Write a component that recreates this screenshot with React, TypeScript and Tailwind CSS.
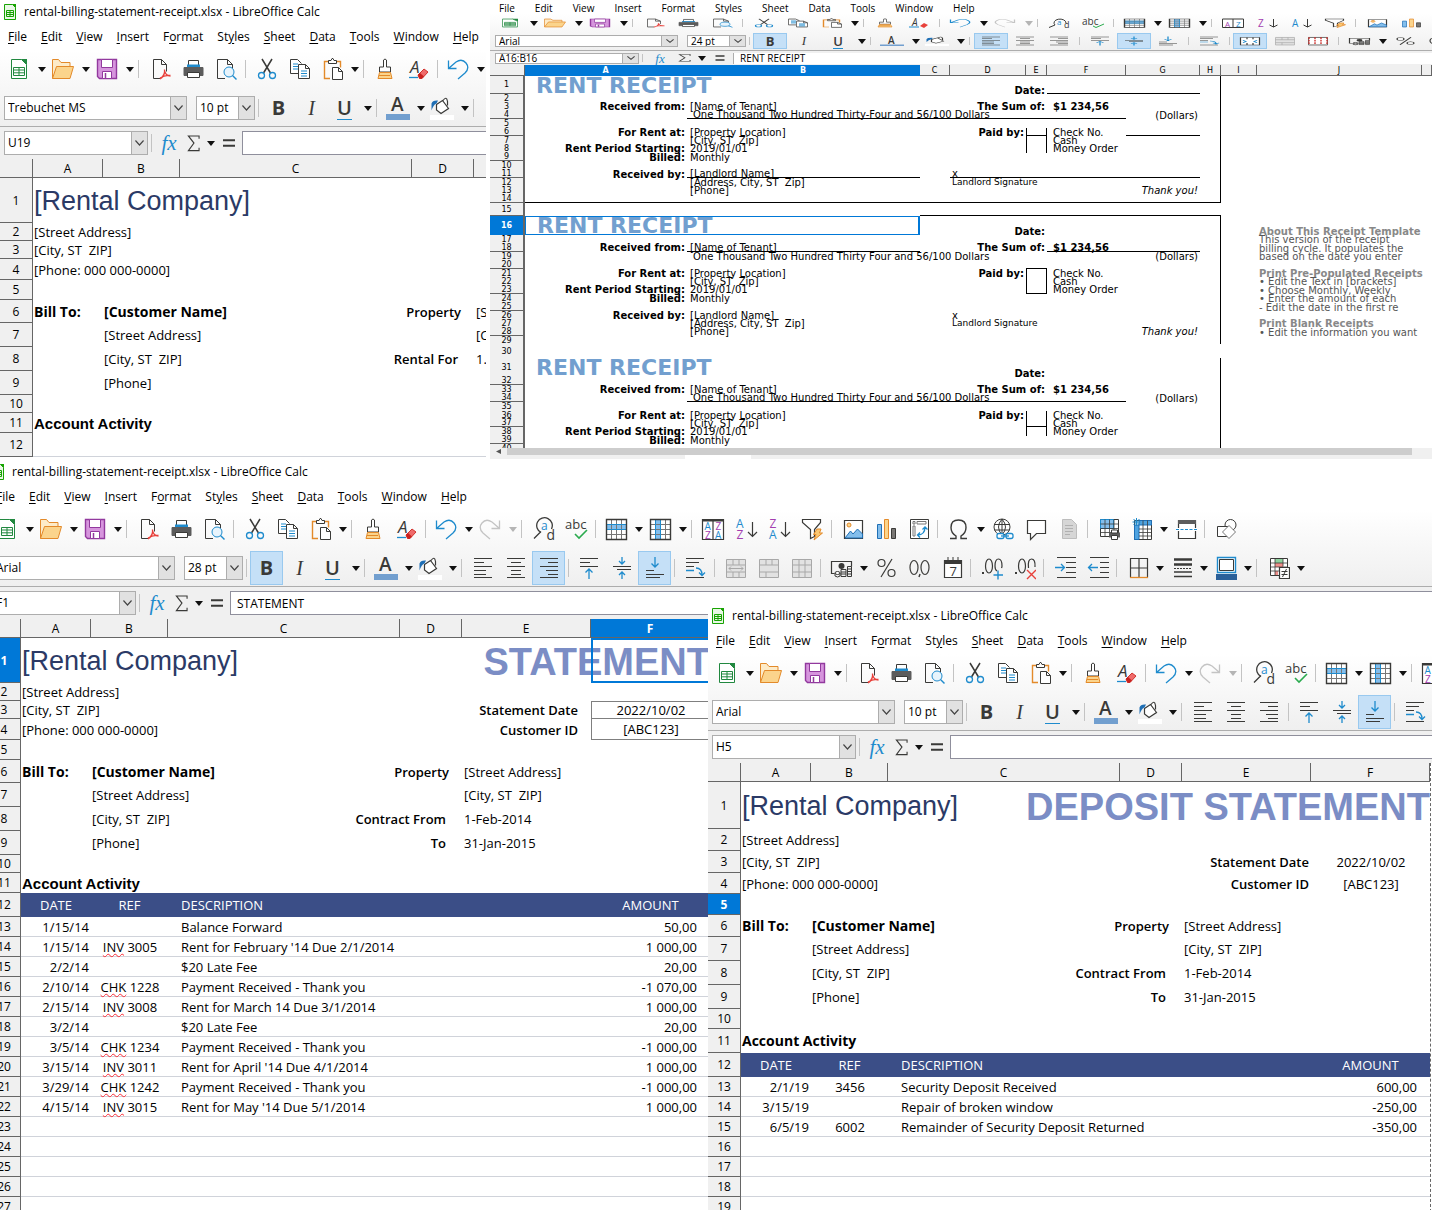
import type { ReactNode } from "react";
import clsx from "clsx";

const K = "#3a3a38";
const B = "#1e8bcd";

const sans = "font-['Open_Sans','Noto_Sans',sans-serif]";
const arial = "font-['Liberation_Sans',Arial,sans-serif]";
const wide = "font-['DejaVu_Sans',Verdana,sans-serif]";

const svgText = { fontFamily: "Open Sans, Noto Sans, sans-serif" };

const gridLines = "M2.5 7.5h20M2.5 12.5h20M2.5 17.5h20M7.5 2.5v20M12.5 2.5v20M17.5 2.5v20";

const icons: Record<string, ReactNode> = {
    new: <>
        <path d="M4.5 2.5h10l5 5v14h-15z" fill="#fff" stroke="#21883f" />
        <path d="M14 2h6v6z" fill="#21883f" />
        <path d="M6.5 10.5h11v8h-11zM6.5 13h11M6.5 15.8h11M12 10.5v8" fill="none" stroke="#21883f" />
    </>,
    open: <>
        <path d="M1.5 21.5v-19h6l2.5 3h9v5" fill="#fdebc8" stroke="#e38a2a" />
        <path d="M1.5 21.5l4-12h17l-3.5 12z" fill="#fbd48c" stroke="#e38a2a" />
    </>,
    save: <>
        <path d="M2.5 2.5h19v19h-17l-2-2z" fill="#d695dd" stroke="#92399e" strokeWidth="1.4" />
        <path d="M6.5 2.5h11v8h-11z" fill="#fff" stroke="#92399e" />
        <path d="M7.5 21.5v-7h9v7z" fill="#fff" stroke="#92399e" />
        <path d="M10.5 21v-5" stroke="#92399e" strokeWidth="1.5" />
    </>,
    pdf: <>
        <path d="M12 21.5H5.5v-19h8l5 5v7M13.5 2.5v5h5" fill="none" stroke={K} />
        <path d="M12 22c3-2 5-6 4.5-9.500M16.500 13c.5 4 3 6 6 6M12 21c3-2 6-3 10.500-2.500" fill="none" stroke="#e8403a" strokeWidth="1.3" />
    </>,
    print: <>
        <path d="M7.5 9.5v-6h10v6" fill="#fff" stroke={K} />
        <path d="M6 7.5h13v3H6z" fill={B} />
        <path d="M3 10.5h19v8H3z" fill="#5c5c5c" stroke="#5c5c5c" strokeLinejoin="round" />
        <path d="M6.5 15.5h12v5h-12z" fill="#fff" stroke={K} />
    </>,
    preview: <>
        <path d="M11 21.5H3.5v-19h10l5 5v4M13.5 2.5v5h5" fill="none" stroke={K} />
        <circle cx="15" cy="15" r="5" fill="#e8f4fc" stroke={B} />
        <path d="M18.5 18.5l4 4" stroke={B} strokeWidth="1.5" />
    </>,
    cut: <>
        <path d="M8 2l8.500 14M18 2L9.500 16" stroke={K} strokeWidth="1.5" />
        <circle cx="7.5" cy="18.5" r="3" fill="none" stroke={B} strokeWidth="1.3" />
        <circle cx="18.5" cy="18.5" r="3" fill="none" stroke={B} strokeWidth="1.3" />
    </>,
    copy: <>
        <path d="M11 16.5H3.5v-14h7l4 4" fill="#fff" stroke={K} />
        <path d="M6 7h5M6 9.500h5M6 12h5" stroke={B} />
        <path d="M11.5 7.5h7l4 4v10h-11zM18.5 7.5v4h4" fill="#fff" stroke={K} />
        <path d="M14 14h6M14 16.5h6M14 19h6" stroke={B} />
    </>,
    paste: <>
        <path d="M10 21.5H4.5v-17h16v6" fill="none" stroke="#e38a2a" strokeWidth="1.4" />
        <path d="M8.500 6.500v-3h2.500l1-2h1l1 2h2.500v3z" fill="#fff" stroke={K} />
        <path d="M12.5 10.500h6l4 4v8h-10zM18.500 10.500v4h4" fill="#fff" stroke={K} />
    </>,
    brush: <>
        <path d="M10.5 10V3q1.500-2 3 0v7h4v5H6.500v-5z" fill="#fff" stroke={K} />
        <path d="M6.500 15.500h11l1.500 6H5z" fill="#fbd48c" stroke="#e38a2a" />
        <path d="M6 18.500h11" stroke="#e38a2a" />
    </>,
    clear: <>
        <text x="4" y="16" fontSize="17" fontStyle="italic" fill={K} style={svgText}>A</text>
        <path d="M3 20.500h9" stroke={B} strokeWidth="1.3" />
        <path d="M12 18l6-6 4 3-6 6.500h-2.500z" fill="#ef6b6b" stroke="#d2322d" />
        <path d="M12 18l2-2 4 3.500-2 2h-2.500z" fill="#c9211e" />
    </>,
    undo: <path d="M2.500 3.500v8h8M2.500 11.500L10 5q6-4 10 1t-1 10l-7 6" fill="none" stroke={B} strokeWidth="1.3" />,
    redo: <path d="M21.500 3.500v8h-8M21.500 11.500L14 5q-6-4-10 1t1 10l7 6" fill="none" stroke="#c4c4c4" strokeWidth="1.3" />,
    find: <>
        <path d="M20.500 12a7.800 7.800 0 1 0-10.500 3.500M10 14.500l-7 7" fill="none" stroke={K} strokeWidth="1.3" />
        <text x="10" y="12.500" fontSize="12" fill={B} style={svgText}>a</text>
        <text x="15.500" y="22.500" fontSize="14" fill={K} style={svgText}>d</text>
    </>,
    spell: <>
        <text x="1" y="12" fontSize="13" fill={K} style={svgText}>abc</text>
        <path d="M11 17l4 4 8-8" fill="none" stroke="#2bab4f" strokeWidth="1.6" />
    </>,
    row: <>
        <path d="M2.500 2.500h20v20h-20z" fill="#fff" />
        <path d="M2.500 7.500h20v5h-20z" fill="#83beec" />
        <path d={gridLines} stroke="#777" />
        <path d="M2.500 7.500h20M2.500 12.500h20" stroke={B} />
        <path d="M2.500 2.500h20v20h-20z" fill="none" stroke={K} strokeWidth="1.4" />
    </>,
    col: <>
        <path d="M2.500 2.500h20v20h-20z" fill="#fff" />
        <path d="M7.500 2.500h5v20h-5z" fill="#83beec" />
        <path d={gridLines} stroke="#777" />
        <path d="M7.500 2.500v20M12.500 2.500v20" stroke={B} />
        <path d="M2.500 2.500h20v20h-20z" fill="none" stroke={K} strokeWidth="1.4" />
    </>,
    sort: <>
        <path d="M1.500 2.500h21v20h-21zM12 3v19" fill="#fff" stroke={K} strokeWidth="1.2" />
        <path d="M1 2h22v2.500H1z" fill={K} />
        <g fontSize="10" style={svgText}>
            <text x="3.500" y="13" fill={B}>A</text>
            <text x="4" y="22" fill="#a33eb0">Z</text>
            <text x="14.500" y="13" fill="#a33eb0">Z</text>
            <text x="14" y="22" fill={B}>A</text>
        </g>
    </>,
    asc: <>
        <g fontSize="12" style={svgText}>
            <text x="2" y="11" fill={B}>A</text>
            <text x="2.500" y="22" fill="#a33eb0">Z</text>
        </g>
        <path d="M18.500 5v14M14 15l4.500 4.500L23 15" fill="none" stroke={K} strokeWidth="1.2" />
    </>,
    desc: <>
        <g fontSize="12" style={svgText}>
            <text x="2.500" y="11" fill="#a33eb0">Z</text>
            <text x="2" y="22" fill={B}>A</text>
        </g>
        <path d="M18.500 5v14M14 15l4.500 4.500L23 15" fill="none" stroke={K} strokeWidth="1.2" />
    </>,
    filter: <>
        <path d="M2.500 2.500h18v3l-6 7v7l-4 2v-9l-8-7z" fill="#fff" stroke={K} strokeWidth="1.2" />
        <path d="M17 12h4l-1.500 4h3L14 23l2-5.500h-2.500z" fill="#fbc873" stroke="#e38a2a" />
    </>,
    image: <>
        <path d="M4.500 3.500h18v18h-18z" fill="#fff" stroke={K} strokeWidth="1.2" />
        <circle cx="9" cy="8" r="2" fill="#fbd48c" stroke="#e38a2a" />
        <path d="M5 21l5.500-7 2.500 3 4.500-5 5 5v4z" fill="#83beec" stroke="#1f6fb5" />
    </>,
    chart: <>
        <path d="M4.500 7.500h4v14h-4z" fill="#83beec" stroke="#1f6fb5" />
        <path d="M11.500 2.500h4v19h-4z" fill="#fbd48c" stroke="#e38a2a" />
        <path d="M18.500 11.500h4v10h-4z" fill="#797774" stroke={K} />
    </>,
    pivot: <>
        <path d="M4.500 2.500h18v19h-18z" fill="#fff" stroke={K} />
        <path d="M7 4.500h2V7H7zM11 4.500h9V7h-9zM7 9h2v10H7z" fill="none" stroke="#777" />
        <path d="M11.500 18q7.500 0 7.500-8M16.500 12.500L19 10l2.500 2.500M14 15.500L11.500 18l2.500 2.500" fill="none" stroke={B} strokeWidth="1.3" />
    </>,
    omega: <path d="M4 21.500h6V19Q5 16 5 10.500 5 3 12.500 3T20 10.500q0 5.500-5 8.500v2.500h6" fill="none" stroke={K} strokeWidth="1.4" />,
    link: <>
        <circle cx="12" cy="10" r="8" fill="#fff" stroke={K} />
        <path d="M12 2q-7 8 0 16M12 2q7 8 0 16M4.500 7.500h15M4.500 13h15M12 2v16" fill="none" stroke={K} />
        <rect x="7" y="16.500" width="7" height="5" rx="2" fill="#fff" stroke={B} strokeWidth="1.3" />
        <rect x="16" y="16.500" width="7" height="5" rx="2" fill="#fff" stroke={B} strokeWidth="1.3" />
        <path d="M11 19h8" stroke={B} strokeWidth="1.3" />
    </>,
    comment: <path d="M4.500 3.500h18v13h-9l-6 6v-6h-3z" fill="#fff" stroke={K} strokeWidth="1.2" />,
    page: <>
        <path d="M6.500 2.500h9l5 5v14h-14z" fill="#d6d6d6" stroke="#bdbdbd" />
        <path d="M9 8.500h8M9 11.500h8M9 14.500h8M9 17.500h5" stroke="#b0b0b0" />
    </>,
    printArea: <>
        <path d="M4.500 2.500h18v17h-18z" fill="#fff" stroke={K} />
        <path d="M4.500 2.500h13v9h-13z" fill="#83beec" stroke={B} />
        <path d="M4.500 7h18M4.500 11.500h18M4.500 15.500h18M9 2.500v17M13.500 2.500v17M18 2.500v17" stroke={K} strokeWidth=".8" />
        <path d="M13 15.500h11v5H13z" fill="#5c5c5c" />
        <path d="M15.500 13h6v3h-6zM15.500 18.500h6v4h-6z" fill="#fff" stroke={K} />
    </>,
    freeze: <>
        <path d="M5.500 3.500h17v19h-17z" fill="#fff" stroke={K} />
        <path d="M5.500 8v14.500H10V8zM10 3.500h12.500V8H10z" fill="#4fa3e0" stroke="#1f6fb5" />
        <path d="M10 12h12.500M10 15.500h12.500M10 19h12.500M14 3.500v19M18.500 3.500v19" stroke={K} strokeWidth=".8" />
        <path d="M7.500 1v8M3.500 5h8M4.500 2l6 6M10.500 2l-6 6" stroke={B} />
    </>,
    split: <>
        <path d="M5.500 3.500h17v18h-17z" fill="#fff" stroke={K} strokeWidth="1.2" />
        <path d="M5 3h18v4H5z" fill="#5c5c5c" />
        <path d="M3 12.500h21" stroke="#fff" strokeWidth="3" />
        <path d="M3 12.500h21" stroke={B} strokeDasharray="3 1.500" />
    </>,
    draw: <>
        <circle cx="17.500" cy="8" r="5.500" fill="#fff" stroke={K} />
        <path d="M4.500 9.500h11v10h-11z" fill="#fff" stroke={K} />
        <path d="M16 8.500l6.500 6.500-6.500 6.500L9.500 15z" fill="#fff" stroke="#777" />
    </>,
    fontColor: <>
        <text x="5" y="15" fontSize="19" fontWeight="600" fill={K} style={svgText}>A</text>
        <path d="M0 18h24v6H0z" fill="#729fcf" />
    </>,
    fill: <>
        <path d="M6.500 8.500l6-4 6 8-7.500 5-4.500-3.500zM13 4.500q3.500-5 4.500 1v4" fill="#fff" stroke={K} strokeWidth="1.2" />
        <path d="M8 4.500q-5.500-.5-6.500 3v7q2-6 5-7z" fill="#1f6fb5" />
        <path d="M0 19h24v5H0z" fill="#fff" />
    </>,
    left: <path d="M3 2.500h18M3 6.500h10M3 10.500h18M3 14.500h12M3 18.500h12M3 21.500h18" stroke={K} strokeWidth="1.2" />,
    center: <path d="M3 2.500h18M7 6.500h10M3 10.500h18M7 14.500h10M7 18.500h10M3 21.500h18" stroke={K} strokeWidth="1.2" />,
    right: <path d="M3 2.500h18M11 6.500h10M3 10.500h18M9 14.500h12M11 18.500h10M3 21.500h18" stroke={K} strokeWidth="1.2" />,
    top: <>
        <path d="M3 2.500h18M3 6.500h10M3 10.500h18" stroke={K} strokeWidth="1.2" />
        <path d="M12 23V13M8.500 16.500L12 13l3.500 3.500" fill="none" stroke={B} strokeWidth="1.3" />
    </>,
    middle: <>
        <path d="M3 10.500h18M7 13.500h14" stroke={K} strokeWidth="1.2" />
        <path d="M12 1v7M9 5l3 3 3-3M12 23v-7M9 19l3-3 3 3" fill="none" stroke={B} strokeWidth="1.3" />
    </>,
    bottom: <>
        <path d="M3 14.500h8M3 18.500h18M3 21.500h14" stroke={K} strokeWidth="1.2" />
        <path d="M12 1v10M8.500 7.500L12 11l3.500-3.500" fill="none" stroke={B} strokeWidth="1.3" />
    </>,
    wrap: <>
        <path d="M3 2.500h18M3 6.500h13M3 10.500h8M3 21.500h18" stroke={K} strokeWidth="1.2" />
        <path d="M3 14.500h8M13 12q6 0 6 7M16 16.500l3 3 3-3" fill="none" stroke={B} strokeWidth="1.3" />
    </>,
    merge: <>
        <path d="M3.500 3.500h19v18h-19zM3.500 9h19M3.500 16h19M10 3.500V9M16 3.500V9M10 16v5.500M16 16v5.500" fill="#e2e2e2" stroke="#a8a8a8" />
        <path d="M6 12.500h14M8 10.500l-2 2 2 2M18 10.500l2 2-2 2" fill="none" stroke="#a8a8a8" />
    </>,
    mergeOn: <>
        <path d="M2.500 3.500h19v18h-19z" fill="#fff" stroke={K} strokeWidth="1.2" />
        <path d="M9 3.500V8M15 3.500V8M9 17v4.500M15 17v4.500" stroke={K} strokeWidth="1.2" />
        <path d="M5 10l3 3-3 3M19 10l-3 3 3 3" fill="none" stroke={B} strokeWidth="1.5" />
    </>,
    mergeRow: <path d="M3.500 3.500h19v18h-19zM3.500 9h19M3.500 16h19M10 3.500V9M16 3.500V9M10 16v5.500" fill="#e2e2e2" stroke="#a8a8a8" />,
    unmerge: <path d="M3.500 3.500h19v18h-19zM3.500 9h19M3.500 16h19M10 3.500v18M16 3.500v18" fill="#e2e2e2" stroke="#a8a8a8" />,
    unmergeOn: <>
        <path d="M2.500 3.500h19v18h-19z" fill="#fff" stroke={K} />
        <path d="M3 3v18M9 3v18M15 3v18M21 3v18" stroke="#c9211e" strokeWidth="1.3" strokeDasharray="4 2" />
    </>,
    currency: <>
        <path d="M5.500 17.500H2.500v-12h20v5" fill="none" stroke={K} strokeWidth="1.2" />
        <circle cx="12.500" cy="10" r="3" fill={K} />
        <ellipse cx="8.500" cy="17" rx="2.500" ry="1.500" fill="#fff" stroke={K} />
        <path d="M6 17v3q2.500 2 5 0v-3M12 13.500h5v7h-5zM12 16h5M12 18h5M18.500 10.500h4v10h-4zM18.500 13h4M18.500 15.500h4M18.500 18h4" fill="none" stroke={K} />
    </>,
    percent: <>
        <circle cx="8.500" cy="7" r="3.500" fill="none" stroke={K} strokeWidth="1.2" />
        <circle cx="18.500" cy="17" r="3.500" fill="none" stroke={K} strokeWidth="1.2" />
        <path d="M19 3L8 21" stroke={K} strokeWidth="1.2" />
    </>,
    number: <>
        <ellipse cx="8" cy="11.500" rx="4" ry="7" fill="none" stroke={K} strokeWidth="1.2" />
        <ellipse cx="19" cy="11.500" rx="4" ry="7" fill="none" stroke={K} strokeWidth="1.2" />
        <path d="M14 18l-1 3" stroke={K} strokeWidth="1.4" />
    </>,
    date: <>
        <path d="M5.500 4.500h17v17h-17z" fill="#fff" stroke={K} strokeWidth="1.2" />
        <path d="M5 4h18v4H5z" fill={K} />
        <path d="M9 1v4M14 1v4M19 1v4" stroke={K} />
        <text x="10.500" y="20" fontSize="13" fill={K} style={svgText}>7</text>
    </>,
    addDec: <>
        <ellipse cx="10" cy="10" rx="3.500" ry="7" fill="none" stroke={K} strokeWidth="1.2" />
        <path d="M18 15q-2-1-2-5 0-7 3.500-7T23 10q0 1-.5 2" fill="none" stroke={K} strokeWidth="1.2" />
        <path d="M3 16h2v2H3z" fill={K} />
        <path d="M19 14.500v9M14.500 19H24" stroke={B} strokeWidth="1.4" />
    </>,
    delDec: <>
        <ellipse cx="10" cy="10" rx="3.500" ry="7" fill="none" stroke={K} strokeWidth="1.2" />
        <path d="M16.500 12q-1-9 3-9t3.500 8" fill="none" stroke={K} strokeWidth="1.2" />
        <path d="M3 16h2v2H3z" fill={K} />
        <path d="M15 14l9 9M24 14l-9 9" stroke="#e8403a" strokeWidth="1.4" />
    </>,
    indent: <>
        <path d="M5 1.500h19M14 6.500h10M14 11.500h10M14 16.500h10M5 21.500h19" stroke={K} strokeWidth="1.2" />
        <path d="M3 11.500h9M9 8l3.500 3.500L9 15" fill="none" stroke={B} strokeWidth="1.3" />
    </>,
    outdent: <>
        <path d="M5 1.500h19M15 6.500h9M15 11.500h9M15 16.500h9M5 21.500h19" stroke={K} strokeWidth="1.2" />
        <path d="M13 11.500H4M7 8l-3.500 3.500L7 15" fill="none" stroke={B} strokeWidth="1.3" />
    </>,
    borders: <>
        <path d="M5.500 21.500v-19h17v19M5.500 12h17M14 2.500v19" fill="none" stroke={K} strokeWidth="1.2" />
        <path d="M5 21.500h18" stroke="#e38a2a" strokeWidth="1.3" />
    </>,
    lineStyle: <>
        <path d="M5 3.500h18M5 8.500h18" stroke={K} strokeWidth="2.500" />
        <path d="M5 12.500h18" stroke={K} strokeDasharray="2 1" />
        <path d="M5 16h18M5 20.500h18" stroke={K} strokeWidth="1.4" />
    </>,
    borderColor: <>
        <path d="M4.500 1.500h18v15h-18z" fill="#fff" stroke={B} strokeWidth="1.4" />
        <path d="M6.500 3.500h14v11h-14z" fill="none" stroke={K} />
        <path d="M3 18h21v6H3z" fill="#2a6099" />
    </>,
    cond: <>
        <path d="M4.500 2.500h17v17h-17z" fill="#fff" stroke={K} />
        <path d="M9 3h8v4H9z" fill="#8fd19e" />
        <path d="M9 7h8v4H9z" fill="#f08f8b" />
        <path d="M9 15h3v4H9z" fill="#f08f8b" />
        <path d="M4.500 7h17M4.500 11h17M4.500 15h9M9 2.500v17M17 2.500v8" stroke={K} strokeWidth=".8" />
        <path d="M13.500 11.500h10v11h-10z" fill="#fff" stroke={K} strokeWidth="1.2" />
        <path d="M15.500 15.500h6M15.500 18.500h6M20.500 13l-4 8" stroke={K} />
    </>,
};

// low versions of the icons that carry letters, so the letters keep their shape
const lowIcons: Record<string, ReactNode> = {
    clear: <>
        <text x="5" y="8" fontSize="10" fontStyle="italic" fill={K} style={svgText}>A</text>
        <path d="M2 9h10" stroke={B} />
        <path d="M13 8l4-3 4 2-4 3z" fill="#e8403a" />
    </>,
    find: <>
        <path d="M8 7L2 9.500M8 7a6 3.800 0 1 1 11-2" fill="none" stroke={K} />
        <text x="10" y="7" fontSize="8" fill={B} style={svgText}>a</text>
        <text x="17" y="10" fontSize="9" fill={K} style={svgText}>d</text>
    </>,
    spell: <>
        <text x="1" y="7" fontSize="10" fill={K} style={svgText}>abc</text>
        <path d="M12 8l3 1.500L23 6" fill="none" stroke="#2bab4f" />
    </>,
    sort: <>
        <path d="M1.500 1h21v8.500h-21zM12 1v8" fill="#fff" stroke={K} />
        <text x="4" y="8.500" fontSize="8" fill="#a33eb0" style={svgText}>A</text>
        <text x="15" y="8.500" fontSize="8" fill={B} style={svgText}>Z</text>
    </>,
    asc: <>
        <text x="3" y="9" fontSize="10" fill="#a33eb0" style={svgText}>Z</text>
        <path d="M18.500 1v8M14.500 7l4 2 4-2" fill="none" stroke={K} />
    </>,
    desc: <>
        <text x="3" y="9" fontSize="10" fill={B} style={svgText}>A</text>
        <path d="M18.500 1v8M14.500 7l4 2 4-2" fill="none" stroke={K} />
    </>,
    fontColor: <>
        <text x="8" y="8" fontSize="10" fontWeight="600" fill={K} style={svgText}>A</text>
        <path d="M0 8.500h24v2H0z" fill="#729fcf" />
    </>,
    date: <path d="M3.500 1h18v8h-18z" fill="#fff" stroke={K} />,
};

const Icon = ({ name, low }: { name: string; low?: boolean }) => {
    if (low && lowIcons[name]) {
        return <svg viewBox="0 0 24 10" className="h-[10px] w-6 shrink-0">{lowIcons[name]}</svg>;
    }
    return (
        <svg viewBox="0 0 24 24" preserveAspectRatio="none" className={low ? "h-[10px] w-6 shrink-0" : "size-6 shrink-0"}>
            {icons[name]}
        </svg>
    );
};

const Caret = ({ pale, label }: { pale?: boolean; label: string }) => (
    <button aria-label={label} className="flex h-full w-[11px] shrink-0 items-center justify-end">
        <svg viewBox="0 0 8 5" className="h-[5px] w-2">
            <path d="M0 0h8L4 5z" fill={pale ? "#b5b5b5" : "#111"} />
        </svg>
    </button>
);

const Sep = ({ wide, low }: { wide?: boolean; low?: boolean }) => (
    <div className={clsx("flex shrink-0 justify-center", wide ? "w-[9px]" : "w-[7px]")}>
        <div className={clsx("w-px bg-[#c3c3c3]", low ? "h-2" : "h-[18px]")} />
    </div>
);

// "|" is a separator, "||" the wider one after a drop-down, a trailing ":v" adds a drop-down
const Tools = ({ items, low, on = [] }: { items: string; low?: boolean; on?: string[] }) => (
    <>
        {items.split(" ").map((item, i) => {
            if (item === "|" || item === "||") return <Sep key={i} wide={item === "||"} low={low} />;
            const drop = item.endsWith(":v");
            const name = item.replace(":v", "");
            const letter = ["B", "I", "U"].includes(name);
            return (
                <div key={i} className="flex h-full shrink-0 items-center">
                    <button
                        aria-label={name}
                        className={clsx(
                            "flex items-center justify-center border",
                            low ? "h-4 w-[34px]" : "h-[34px] w-[33px]",
                            on.includes(name) ? "border-[#99c9ef] bg-[#c5e0f7]" : "border-transparent"
                        )}
                    >
                        {letter ? (
                            <span
                                className={clsx(
                                    "text-[#3a3a38]",
                                    low ? "text-[13px] leading-[14px]" : "text-[20px] leading-6",
                                    name === "B" && "font-bold",
                                    name === "I" && "font-['Liberation_Serif',serif] italic",
                                    name === "U" && "border-b border-[#1e8bcd] font-semibold",
                                    name === "U" && (low ? "leading-[11px]" : "leading-[22px]")
                                )}
                            >
                                {name}
                            </span>
                        ) : (
                            <Icon name={name} low={low} />
                        )}
                    </button>
                    {drop && <Caret label={`${name} options`} pale={name === "redo"} />}
                </div>
            );
        })}
    </>
);

const Chevron = ({ low }: { low?: boolean }) => (
    <span className="pointer-events-none absolute inset-y-0 right-0 flex w-[17px] items-center justify-center border border-[#adadad] bg-[#e1e1e1]">
        <svg viewBox="0 0 10 6" preserveAspectRatio="none" className={low ? "h-1 w-2" : "h-[6px] w-[9px]"}>
            <path d="M.5.5L5 5l4.500-4.500" fill="none" stroke="#444" strokeWidth="1.3" />
        </svg>
    </span>
);

const Combo = ({ value, label, width, low }: { value: string; label: string; width: string; low?: boolean }) => (
    <label className={clsx("relative flex shrink-0", width, low ? "h-3" : "h-6")}>
        <select
            aria-label={label}
            className={clsx("w-full appearance-none border border-[#adadad] bg-white pl-[3px]", low ? "text-[10px] leading-[10px]" : "text-xs")}
        >
            <option>{value}</option>
        </select>
        <Chevron low={low} />
    </label>
);

const menus: [string, string, string][] = [
    ["", "F", "ile"], ["", "E", "dit"], ["", "V", "iew"], ["", "I", "nsert"], ["F", "o", "rmat"], ["St", "y", "les"],
    ["", "S", "heet"], ["", "D", "ata"], ["", "T", "ools"], ["", "W", "indow"], ["", "H", "elp"],
];

const standardItems =
    "new:v open:v save:v || pdf print preview | cut copy paste:v || brush clear | undo:v redo:v || find spell | row:v col:v || sort asc desc filter | image chart pivot | omega:v link comment page | printArea freeze:v split | draw";
const formatItems =
    "B I U:v || fontColor:v fill:v || left center right | top middle bottom | wrap | merge mergeRow unmerge | currency:v percent number date | addDec delDec | indent outdent | borders:v lineStyle:v borderColor:v || cond:v";

type WindowProps = {
    title?: string;
    font: string;
    size: string;
    cell: string;
    formula?: string;
    on?: string[];
    low?: boolean;
    children: ReactNode;
};

const CalcWindow = ({ title, font, size, cell, formula = "", on, low, children }: WindowProps) => (
    <section className={clsx("flex h-full w-full flex-col overflow-hidden bg-white text-black", sans)}>
        {title && (
            <header className="flex h-6 shrink-0 items-center gap-2 pl-1 text-xs whitespace-nowrap">
                <svg viewBox="0 0 12 16" className="h-4 w-3">
                    <path d="M.5.5h8l3 3v12H.5z" fill="#e9f7e6" stroke="#18a303" />
                    <path d="M8 0h4v4z" fill="#18a303" />
                    <path d="M2.500 6.500h7v6h-7zM2.500 8.500h7M2.500 10.500h7M6 6.500v6" fill="none" stroke="#18a303" />
                </svg>
                <h1>{title}</h1>
            </header>
        )}
        <nav className={clsx("flex shrink-0 items-center whitespace-nowrap", low ? "h-[14px] gap-5 pt-0.5 pl-[9px] text-[10px] leading-3" : "h-[26px] gap-[14px] pl-2 text-xs")}>
            {menus.map(([a, key, b]) => (
                <button key={key + b}>
                    {a}<span className={low ? "" : "underline underline-offset-2"}>{key}</span>{b}
                </button>
            ))}
        </nav>
        <div className="shrink-0 bg-linear-to-b from-white to-[#efefef]">
            <div className={clsx("flex items-center", low ? "h-[18px] pl-[3px]" : "h-[38px] pl-0.5")}>
                <Tools items={standardItems} low={low} />
            </div>
            <div className={clsx("flex items-center border-b border-[#adadad]", low ? "h-[19px] pl-[5px]" : "h-[39px] pt-0.5 pl-1")}>
                <Combo value={font} label="Font name" width="w-[183px] mr-[9px]" low={low} />
                <Combo value={size} label="Font size" width="w-[59px]" low={low} />
                <Sep low={low} />
                <Tools
                    items={low ? formatItems.replace("merge ", "mergeOn ").replace("unmerge ", "unmergeOn ") : formatItems}
                    low={low}
                    on={on}
                />
            </div>
        </div>
        <div className={clsx("flex shrink-0 items-center bg-[#f0f0f0]", low ? "h-[14px] pl-[5px]" : "h-8 pl-1")}>
            <label className={clsx("relative flex w-36 shrink-0", low ? "h-[11px]" : "h-6")}>
                <input
                    aria-label="Name box"
                    defaultValue={cell}
                    className={clsx("w-full border border-[#adadad] bg-white pl-[3px]", low ? "text-[10px] leading-[9px]" : "text-xs")}
                />
                <Chevron low={low} />
            </label>
            <Sep low={low} />
            <button
                aria-label="Function wizard"
                className={clsx("w-7 shrink-0 font-['Liberation_Serif',serif] text-[#1e8bcd] italic", low ? "text-[13px] leading-[13px]" : "text-[21px] leading-6")}
            >
                fx
            </button>
            <button aria-label="Select function" className="flex shrink-0 items-center">
                <svg viewBox="0 0 14 18" preserveAspectRatio="none" className={clsx("mx-1 w-[13px]", low ? "h-2" : "h-[17px]")}>
                    <path d="M13 4V1H1.500l6 7.500-6 8H13v-3" fill="none" stroke={K} strokeWidth="1.2" />
                </svg>
            </button>
            <Caret label="Function options" />
            <button aria-label="Formula" className="ml-2 flex shrink-0">
                <svg viewBox="0 0 12 8" className={low ? "h-[6px] w-3" : "h-2 w-3"}>
                    <path d="M0 1.200h12M0 6.800h12" stroke={K} strokeWidth="2" />
                </svg>
            </button>
            <input
                aria-label="Input line"
                defaultValue={formula}
                className={clsx("ml-[7px] min-w-0 flex-1 bg-white pl-1.5", low ? "h-[11px] border-l border-[#adadad] text-[10px] leading-[9px]" : "h-6 border border-r-0 border-[#8f8f9c] text-xs")}
            />
        </div>
        {children}
    </section>
);

const colWidths = ["w-[33px]", "w-[70px]", "w-[77px]", "w-[232px]", "w-[62px]", "w-[129px]", "w-[119px]"];

const Sheet = ({ selected, edge, children }: { selected?: string; edge?: boolean; children: ReactNode }) => (
    <div className={clsx("w-fit", edge && "border-r border-dashed border-[#666]")}>
        <table className="w-[722px] table-fixed border-separate border-spacing-0 text-[13px] leading-4 whitespace-nowrap">
            <colgroup>
                {colWidths.map((w, i) => <col key={i} className={w} />)}
            </colgroup>
            <thead className="text-xs">
                <tr className="h-[19px]">
                    {["", "A", "B", "C", "D", "E", "F"].map((c) => (
                        <th
                            key={c}
                            className={clsx(
                                "border-r border-b border-[#666] p-0 pt-0.5",
                                c && c === selected ? "bg-[#0078d7] font-bold text-white" : "bg-[#f0f0f0] font-normal"
                            )}
                        >
                            {c}
                        </th>
                    ))}
                </tr>
            </thead>
            <tbody>{children}</tbody>
        </table>
    </div>
);

const Row = ({ n, h, on, children }: { n: number; h: string; on?: boolean; children?: ReactNode }) => (
    <tr className={h}>
        <th className={clsx("border-r border-b border-[#666] p-0 pt-px text-xs", on ? "bg-[#0078d7] font-bold text-white" : "bg-[#f0f0f0] font-normal")}>
            {n}
        </th>
        {children}
    </tr>
);

const Td = ({ span, className = "", children }: { span?: number; className?: string; children?: ReactNode }) => (
    <td colSpan={span} className={clsx("p-0", !className.includes("pl-") && "pl-px", className)}>{children}</td>
);

const Company = () => <Td span={2} className={clsx("text-[27px] leading-8 text-[#2b3a66]", arial)}>[Rental Company]</Td>;

const bigTitle = clsx("relative pt-0.5 text-right text-[38px] leading-10 font-bold text-[#7b8dc5]", arial);

const Label = ({ children, className = "pr-[13px]" }: { children: ReactNode; className?: string }) => (
    <Td className={clsx("font-semibold", className)}>
        <div className="flex justify-end">{children}</div>
    </Td>
);

const TableHead = () => (
    <>
        <th className="bg-[#3b4e87] p-0 font-normal text-white">DATE</th>
        <th className="bg-[#3b4e87] p-0 font-normal text-white">REF</th>
        <th colSpan={3} className="bg-[#3b4e87] p-0 pl-[13px] text-left font-normal text-white">DESCRIPTION</th>
        <th className="bg-[#3b4e87] p-0 font-normal text-white">AMOUNT</th>
    </>
);

const Entry = ({ n, data = ["", "", "", ""] }: { n: number; data?: string[] }) => {
    const [date, ref, text, amount] = data;
    const [word, num] = ref.split(" ");
    const line = "border-b border-[#d0d3da]";
    return (
        <Row n={n} h="h-5">
            <Td className={clsx(line, "pr-0.5 text-right")}>{date}</Td>
            <Td className={clsx(line, "text-center")}>
                {num ? <><span className="underline decoration-red-500 decoration-wavy decoration-1">{word}</span> {num}</> : ref}
            </Td>
            <Td span={3} className={clsx(line, "pl-[13px]")}>{text}</Td>
            <Td className={clsx(line, "pr-[13px] text-right")}>{amount}</Td>
        </Row>
    );
};

const statement = [
    ["1/15/14", "", "Balance Forward", "50,00"],
    ["1/15/14", "INV 3005", "Rent for February '14 Due 2/1/2014", "1 000,00"],
    ["2/2/14", "", "$20 Late Fee", "20,00"],
    ["2/10/14", "CHK 1228", "Payment Received - Thank you", "-1 070,00"],
    ["2/15/14", "INV 3008", "Rent for March 14 Due 3/1/2014", "1 000,00"],
    ["3/2/14", "", "$20 Late Fee", "20,00"],
    ["3/5/14", "CHK 1234", "Payment Received - Thank you", "-1 000,00"],
    ["3/15/14", "INV 3011", "Rent for April '14 Due 4/1/2014", "1 000,00"],
    ["3/29/14", "CHK 1242", "Payment Received - Thank you", "-1 000,00"],
    ["4/15/14", "INV 3015", "Rent for May '14 Due 5/1/2014", "1 000,00"],
];

const deposit = [
    ["2/1/19", "3456", "Security Deposit Received", "600,00"],
    ["3/15/19", "", "Repair of broken window", "-250,00"],
    ["6/5/19", "6002", "Remainder of Security Deposit Returned", "-350,00"],
];

const street = "[Street Address]";
const city = "[City, ST\u00a0 ZIP]";
const phone = "[Phone: 000 000-0000]";

const BillTo = ({ n, h }: { n: number; h: string }) => (
    <Row n={n} h={h}>
        <Td className="text-sm font-bold">Bill To:</Td>
        <Td span={2} className="text-sm font-bold">[Customer Name]</Td>
        <Label>Property</Label>
        <Td span={2} className="pl-0.5">{street}</Td>
    </Row>
);

const Contact = ({ n, h = "h-6", left, label, value }: { n: number; h?: string; left: string; label?: string; value?: string }) => (
    <Row n={n} h={h}>
        <Td />
        <Td span={2}>{left}</Td>
        <Label className="pr-4">{label}</Label>
        <Td span={2} className="pl-0.5">{value}</Td>
    </Row>
);

const BillingSheet = () => (
    <Sheet>
        <Row n={1} h="h-[45px]"><Company /></Row>
        <Row n={2} h="h-[18px]"><Td>{street}</Td></Row>
        <Row n={3} h="h-[18px]"><Td>{city}</Td></Row>
        <Row n={4} h="h-[21px]"><Td>{phone}</Td></Row>
        <Row n={5} h="h-5" />
        <BillTo n={6} h="h-[23px]" />
        <Contact n={7} left={street} value={city} />
        <Contact n={8} left={city} label="Rental For" value="1. 2014" />
        <Contact n={9} left="[Phone]" />
        <Row n={10} h="h-[18px]" />
        <Row n={11} h="h-5"><Td span={2} className={clsx("pt-0.5 text-[15px] font-bold", arial)}>Account Activity</Td></Row>
        <Row n={12} h="h-6"><Td span={6} className="border-b border-[#d0d3da]" /></Row>
    </Sheet>
);

const StatementSheet = () => (
    <Sheet selected="F">
        <Row n={1} h="h-[45px]" on>
            <Company />
            <Td span={4} className={bigTitle}>
                STATEMENT
                <div className="absolute inset-y-0 right-0 w-[119px] border-2 border-[#0078d7]" />
            </Td>
        </Row>
        <Row n={2} h="h-[18px]"><Td>{street}</Td></Row>
        <Row n={3} h="h-[18px]">
            <Td span={4}>{city}</Td>
            <Label>Statement Date</Label>
            <Td className="border border-[#7f7f7f] text-center">2022/10/02</Td>
        </Row>
        <Row n={4} h="h-[21px]">
            <Td span={4}>{phone}</Td>
            <Label>Customer ID</Label>
            <Td className="border border-t-0 border-[#7f7f7f] text-center">[ABC123]</Td>
        </Row>
        <Row n={5} h="h-5" />
        <BillTo n={6} h="h-[23px]" />
        <Contact n={7} left={street} value={city} />
        <Contact n={8} left={city} label="Contract From" value="1-Feb-2014" />
        <Contact n={9} left="[Phone]" label="To" value="31-Jan-2015" />
        <Row n={10} h="h-[18px]" />
        <Row n={11} h="h-5"><Td span={2} className={clsx("pt-0.5 text-[15px] font-bold", arial)}>Account Activity</Td></Row>
        <Row n={12} h="h-6"><TableHead /></Row>
        {statement.map((d, i) => <Entry key={i} n={13 + i} data={d} />)}
        {[23, 24, 25, 26, 27].map((n) => <Entry key={n} n={n} />)}
    </Sheet>
);

const DepositSheet = () => (
    <Sheet edge>
        <Row n={1} h="h-[47px]">
            <Company />
            <Td span={4} className={bigTitle}>DEPOSIT STATEMENT</Td>
        </Row>
        <Row n={2} h="h-[22px]"><Td>{street}</Td></Row>
        <Row n={3} h="h-[22px]">
            <Td span={4}>{city}</Td>
            <Label className="pr-0.5">Statement Date</Label>
            <Td className="text-center">2022/10/02</Td>
        </Row>
        <Row n={4} h="h-[21px]">
            <Td span={4}>{phone}</Td>
            <Label className="pr-0.5">Customer ID</Label>
            <Td className="text-center">[ABC123]</Td>
        </Row>
        <Row n={5} h="h-[21px]" on />
        <BillTo n={6} h="h-[22px]" />
        <Contact n={7} left={street} value={city} />
        <Contact n={8} left={city} label="Contract From" value="1-Feb-2014" />
        <Contact n={9} left="[Phone]" label="To" value="31-Jan-2015" />
        <Row n={10} h="h-5" />
        <Row n={11} h="h-6"><Td span={2} className="text-sm font-bold">Account Activity</Td></Row>
        <Row n={12} h="h-6"><TableHead /></Row>
        {deposit.map((d, i) => <Entry key={i} n={13 + i} data={d} />)}
        {[16, 17, 18, 19].map((n) => <Entry key={n} n={n} />)}
    </Sheet>
);

// receipt sheet: cells are [columns spanned, text, classes] and cover columns A to G
type ReceiptCell = [number, string, string?];

const receiptCols = ["w-[35px]", "w-[162px]", "w-[233px]", "w-[30px]", "w-[76px]", "w-[21px]", "w-[79px]", "w-[74px]", "w-[21px]", "w-[36px]", "w-[165px]", "w-[10px]"];
const ruledRows = [1, 4, 6, 9, 11, 14, 15, 18, 20, 23, 25, 28, 32, 34, 37, 39];
const lineHeights = ["h-2", "h-[9px]", "h-2", "h-[9px]", "h-2", "h-2", "h-[9px]", "h-2", "h-[9px]", "h-2", "h-2", "h-[9px]", "h-2"];

const notes: Record<number, [string, boolean]> = {
    16: ["About This Receipt Template", true],
    17: ["This version of the receipt", false],
    18: ["billing cycle. It populates the", false],
    19: ["based on the date you enter", false],
    21: ["Print Pre-Populated Receipts", true],
    22: ["• Edit the Text in [brackets]", false],
    23: ["• Choose Monthly, Weekly", false],
    24: ["• Enter the amount of each", false],
    25: ["- Edit the date in the first re", false],
    27: ["Print Blank Receipts", true],
    28: ["• Edit the information you want", false],
};

const rule = "border-b border-black";

const ReceiptRow = ({ n, h, cells, side = true, end }: { n: number; h: string; cells: ReceiptCell[]; side?: boolean; end?: string }) => {
    const note = notes[n];
    return (
        <tr className={h}>
            <th
                className={clsx(
                    "border-r-2 p-0 text-[8px]",
                    n === 16 ? "bg-[#0078d7] font-bold text-white" : "bg-[#f0f0f0] font-normal",
                    ruledRows.includes(n) ? "border-b border-[#666]" : "border-[#666]"
                )}
            >
                {n}
            </th>
            {cells.map(([span, text, cls], i) => (
                <td key={i} colSpan={span} className={clsx("p-0", cls)}>{text}</td>
            ))}
            <td className={clsx("p-0", side && "border-r border-black", end)} />
            <td className="p-0" />
            <td colSpan={2} className={clsx("p-0 pl-0.5 align-bottom", note?.[1] ? "font-bold text-[#888]" : "text-[#555]")}>{note?.[0]}</td>
        </tr>
    );
};

const Receipt = ({ start, kind, count = 14 }: { start: number; kind: 1 | 2 | 3; count?: number }) => {
    const label = "text-right font-bold pr-0.5";
    const value = "pl-[3px]";
    const box = "border-x border-black";
    const one = kind === 1 && rule;
    const two = kind === 2 && rule;
    const odd = kind !== 2 && rule;
    const rows: ReceiptCell[][] = [
        [
            [2, "RENT RECEIPT", clsx("pl-[11px] text-[22px] leading-[17px] font-bold text-[#729fcf]", kind === 2 && "border border-r-2 border-[#0078d7]")],
            [1, ""], [2, "Date:", clsx(label, "align-bottom")], [2, "", clsx(one)],
        ],
        [[7, ""]],
        [[1, "Received from:", label], [1, "[Name of Tenant]", clsx(value, two)], [1, ""], [2, "The Sum of:", label], [2, "$1 234,56", clsx("pl-1.5 font-bold", two)]],
        [[1, ""], [5, `One Thousand Two Hundred Thirty${kind === 1 ? "-" : " "}Four and 56/100 Dollars`, clsx("pl-1.5", odd)], [1, "(Dollars)", "pr-0.5 text-right"]],
        [[4, ""], [1, "", clsx(two)], [2, ""]],
        [[1, "For Rent at:", label], [1, "[Property Location]", value], [1, ""], [1, "Paid by:", label], [1, "", clsx(box, one)], [1, "Check No.", "pl-1.5"], [1, "", clsx(one)]],
        [[1, ""], [1, "[City, ST\u00a0 Zip]", value], [2, ""], [1, "", clsx(box, kind === 3 && rule)], [2, "Cash", "pl-1.5"]],
        [[1, "Rent Period Starting:", label], [1, "2019/01/01", value], [2, ""], [1, "", clsx(box, two)], [2, "Money Order", "pl-1.5"]],
        [[1, "Billed:", label], [6, "Monthly", value]],
        [[7, ""]],
        [[1, "Received by:", label], [1, "[Landlord Name]", clsx(value, one)], [1, ""], [4, "x", clsx("pl-0.5", one)]],
        [[1, ""], [2, "[Address, City, ST\u00a0 Zip]", value], [4, "Landlord Signature", "pl-0.5 text-[9px]"]],
        [[1, ""], [5, "[Phone]", value], [1, "Thank you!", "pr-0.5 text-right italic"]],
        [[7, "", clsx(one)]],
    ];
    return (
        <>
            {rows.slice(0, count).map((cells, i) => (
                <ReceiptRow
                    key={i}
                    n={start + i}
                    h={i === 0 ? (kind === 1 ? "h-[18px]" : "h-[19px]") : lineHeights[i - 1]}
                    cells={cells}
                    end={i === 13 && kind === 1 ? rule : undefined}
                />
            ))}
        </>
    );
};

const ReceiptSheet = () => (
    <>
        <div className="min-h-0 flex-1 overflow-hidden">
            <table className={clsx("w-[942px] table-fixed border-separate border-spacing-0 text-[10px] leading-[7px] whitespace-nowrap", wide)}>
                <colgroup>
                    {receiptCols.map((w, i) => <col key={i} className={w} />)}
                </colgroup>
                <thead>
                    <tr className="h-[11px]">
                        {["", "A", "B", "C", "D", "E", "F", "G", "H", "I", "J", " "].map((c) => (
                            <th
                                key={c}
                                className={clsx(
                                    "border-r border-b p-0 pt-px text-[8px]",
                                    c === "A" || c === "B" ? "border-[#0078d7] bg-[#0078d7] font-bold text-white" : "border-[#666] bg-[#f0f0f0] font-normal"
                                )}
                            >
                                {c}
                            </th>
                        ))}
                    </tr>
                </thead>
                <tbody>
                    <Receipt start={1} kind={1} />
                    <ReceiptRow n={15} h="h-[13px]" cells={[[2, ""], [5, "", rule]]} side={false} end={rule} />
                    <Receipt start={16} kind={2} />
                    <ReceiptRow n={30} h="h-[14px]" cells={[[7, ""]]} side={false} />
                    <Receipt start={31} kind={3} count={10} />
                </tbody>
            </table>
        </div>
        <div className="flex h-[7px] shrink-0 items-center bg-[#f0f0f0] pr-5">
            <svg viewBox="0 0 17 7" className="h-[7px] w-[17px]"><path d="M11 1v5L6 3.500z" fill="#555" /></svg>
            <div className="h-full flex-1 bg-[#cdcdcd]" />
        </div>
        <div className="mb-px flex h-1 shrink-0 bg-[#f0f0f0]">
            <div className="ml-[195px] w-[66px] bg-white" />
        </div>
    </>
);

const title = "rental-billing-statement-receipt.xlsx - LibreOffice Calc";

const App = () => (
    <main className="flex h-screen w-full flex-col overflow-hidden bg-white">
        <div className="flex h-[460px] shrink-0 gap-1">
            <div className="h-[459px] w-[486px] shrink-0">
                <CalcWindow title={title} font="Trebuchet MS" size="10 pt" cell="U19">
                    <BillingSheet />
                </CalcWindow>
            </div>
            <div className="min-w-0 flex-1">
                <CalcWindow font="Arial" size="24 pt" cell="A16:B16" formula="RENT RECEIPT" on={["B", "left", "middle", "mergeOn"]} low>
                    <ReceiptSheet />
                </CalcWindow>
            </div>
        </div>
        <div className="relative min-h-0 flex-1 overflow-hidden">
            <div className="-ml-3 h-full">
                <CalcWindow title={title} font="Arial" size="28 pt" cell="F1" formula="STATEMENT" on={["B", "right", "bottom"]}>
                    <StatementSheet />
                </CalcWindow>
            </div>
            <div className="absolute top-36 right-0 bottom-0 left-[708px]">
                <CalcWindow title={title} font="Arial" size="10 pt" cell="H5" on={["bottom"]}>
                    <DepositSheet />
                </CalcWindow>
            </div>
        </div>
    </main>
);

export default App;
